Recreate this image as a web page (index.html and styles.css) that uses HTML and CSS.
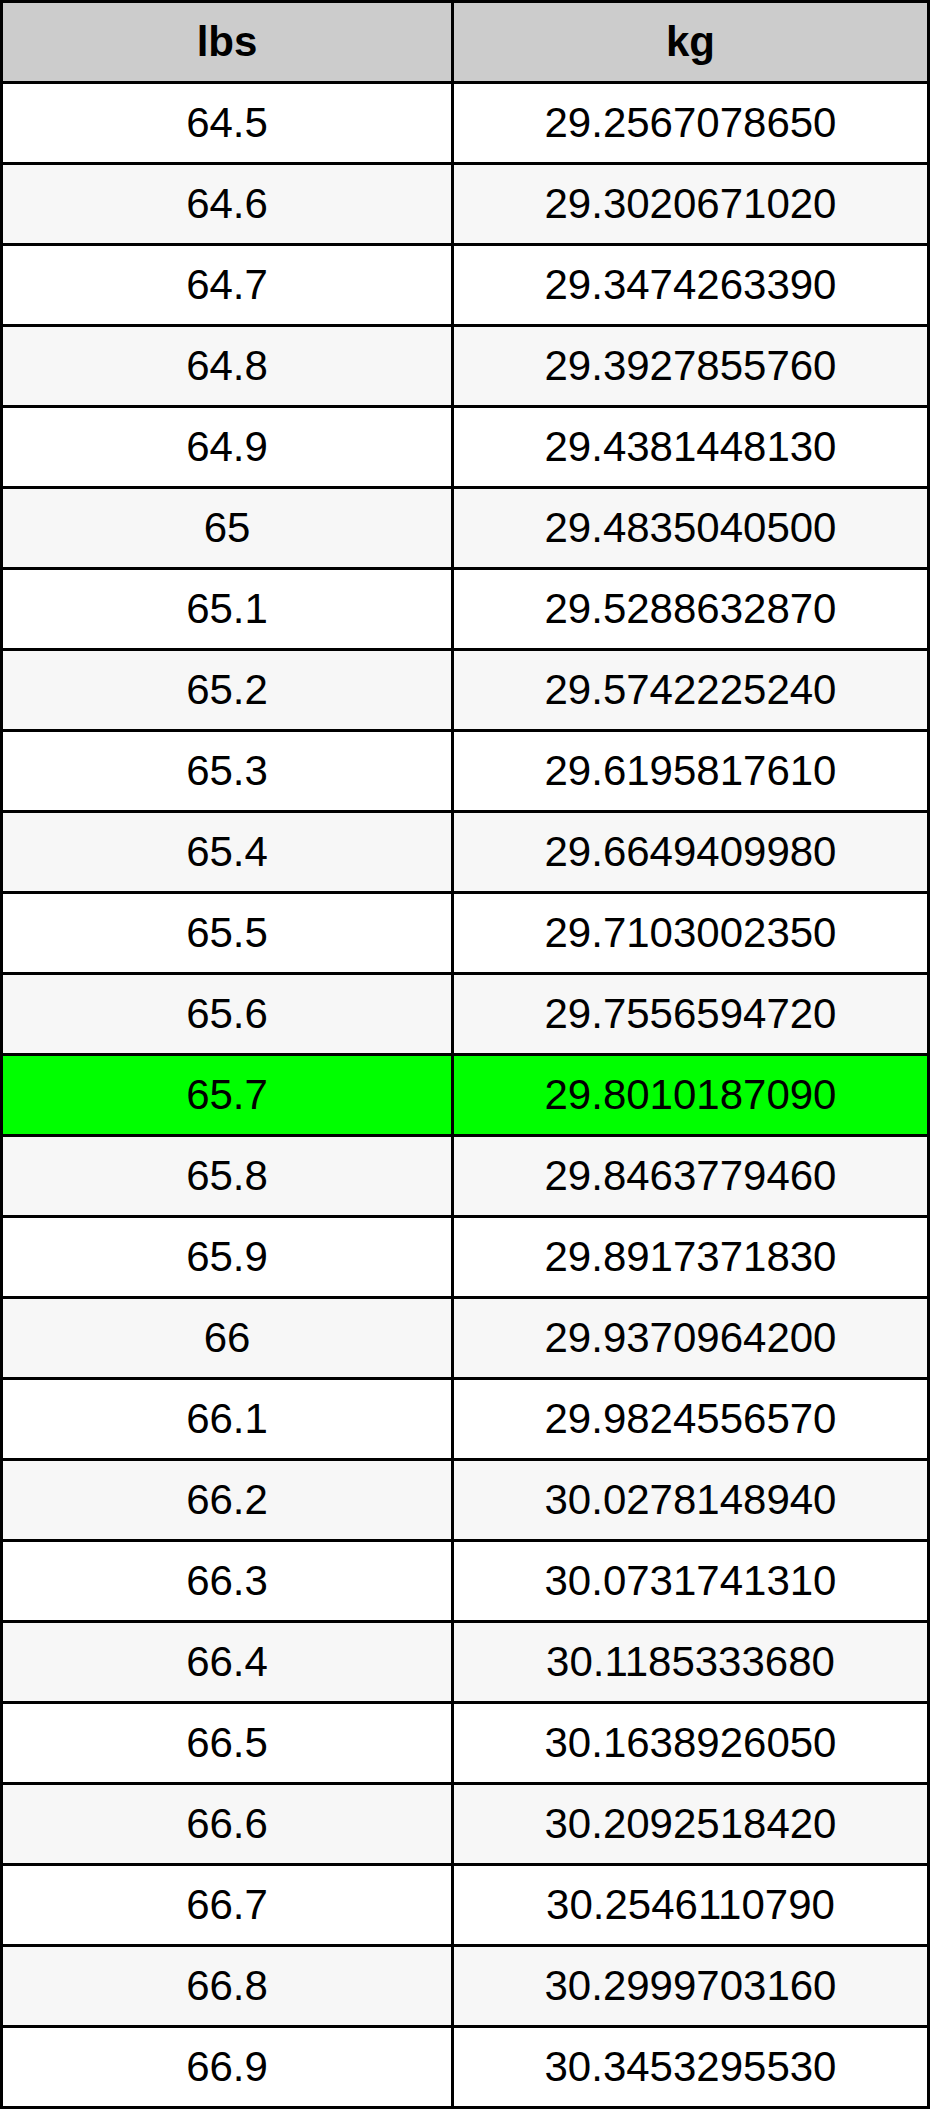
FILE: index.html
```html
<!DOCTYPE html>
<html>
<head>
<meta charset="utf-8">
<title>lbs to kg</title>
<link rel="stylesheet" href="styles.css">
</head>
<body>
<table class="conv">
  <thead>
    <tr><th class="c1">lbs</th><th class="c2">kg</th></tr>
  </thead>
  <tbody>
    <tr><td>64.5</td><td>29.2567078650</td></tr>
    <tr class="alt"><td>64.6</td><td>29.3020671020</td></tr>
    <tr><td>64.7</td><td>29.3474263390</td></tr>
    <tr class="alt"><td>64.8</td><td>29.3927855760</td></tr>
    <tr><td>64.9</td><td>29.4381448130</td></tr>
    <tr class="alt"><td>65</td><td>29.4835040500</td></tr>
    <tr><td>65.1</td><td>29.5288632870</td></tr>
    <tr class="alt"><td>65.2</td><td>29.5742225240</td></tr>
    <tr><td>65.3</td><td>29.6195817610</td></tr>
    <tr class="alt"><td>65.4</td><td>29.6649409980</td></tr>
    <tr><td>65.5</td><td>29.7103002350</td></tr>
    <tr class="alt"><td>65.6</td><td>29.7556594720</td></tr>
    <tr class="hl"><td>65.7</td><td>29.8010187090</td></tr>
    <tr class="alt"><td>65.8</td><td>29.8463779460</td></tr>
    <tr><td>65.9</td><td>29.8917371830</td></tr>
    <tr class="alt"><td>66</td><td>29.9370964200</td></tr>
    <tr><td>66.1</td><td>29.9824556570</td></tr>
    <tr class="alt"><td>66.2</td><td>30.0278148940</td></tr>
    <tr><td>66.3</td><td>30.0731741310</td></tr>
    <tr class="alt"><td>66.4</td><td>30.1185333680</td></tr>
    <tr><td>66.5</td><td>30.1638926050</td></tr>
    <tr class="alt"><td>66.6</td><td>30.2092518420</td></tr>
    <tr><td>66.7</td><td>30.2546110790</td></tr>
    <tr class="alt"><td>66.8</td><td>30.2999703160</td></tr>
    <tr><td>66.9</td><td>30.3453295530</td></tr>
  </tbody>
</table>
</body>
</html>
```
FILE: styles.css
```css
html, body {
  margin: 0;
  padding: 0;
  background: #ffffff;
}

.conv {
  border-collapse: separate;
  border-spacing: 0;
  width: 930px;
  table-layout: fixed;
  border-top: 3px solid #000;
  border-left: 3px solid #000;
  font-family: "Liberation Sans", Arial, sans-serif;
  font-size: 42px;
  color: #000;
}

.conv th,
.conv td {
  padding: 0;
  line-height: 78px;
  text-align: center;
  border-right: 3px solid #000;
  border-bottom: 3px solid #000;
  box-sizing: border-box;
}

.conv th {
  background: #cccccc;
  font-weight: bold;
}

.conv .c1 {
  width: 451px;
}

.conv .c2 {
  width: 476px;
}

.conv td {
  background: #ffffff;
  font-weight: normal;
}

.conv tr.alt td {
  background: #f7f7f7;
}

.conv tr.hl td {
  background: #00ff00;
}
```
